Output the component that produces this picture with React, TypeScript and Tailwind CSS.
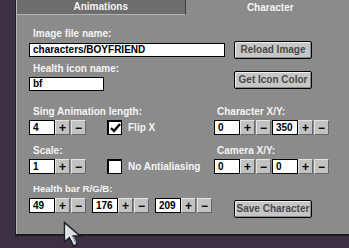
import React from "react";

const StepBtn = ({ label, className = "" }: { label: string; className?: string }) => (
  <div
    className={`w-[15px] h-[15px] flex items-center justify-center bg-[#c2c2c2] border-t border-l border-[#e4e4e4] border-r-[#666] border-b-[#666] border-r border-b text-[12px] leading-none font-bold text-black ${className}`}
  >
    {label}
  </div>
);

const Stepper = ({ value }: { value: string }) => (
  <div className="flex h-[15px]">
    <div className="w-[26px] h-[15px] bg-white border border-black pl-[3px] text-[10px] leading-[13px] font-bold text-black">
      {value}
    </div>
    <StepBtn label="+" />
    <StepBtn label="−" className="ml-px" />
  </div>
);

const Check = ({ checked }: { checked?: boolean }) => (
  <div className="w-[15px] h-[15px] bg-white border border-black border-t-2 border-l-2 flex items-center justify-center">
    {checked && (
      <svg width="11" height="10" viewBox="0 0 11 10">
        <path d="M1 5 L4 8 L10 1" stroke="#000" strokeWidth="2.4" fill="none" />
      </svg>
    )}
  </div>
);

const BigBtn = ({ label }: { label: string }) => (
  <div className="w-[78px] h-[18px] rounded-[2px] border border-black bg-[#c6c6c6] shadow-[inset_1px_1px_0_#efefef,inset_-1px_-1px_0_#8a8a8a] flex items-center justify-center text-[10px] font-bold text-[#4a4a4a] leading-none">
    {label}
  </div>
);

const Label = ({ text, className = "" }: { text: string; className?: string }) => (
  <div className={`h-[12px] text-[10px] leading-[12px] font-bold text-[#f4f4f4] whitespace-nowrap ${className}`}>
    {text}
  </div>
);

export default function App() {
  return (
    <div className="relative w-[349px] h-[248px] overflow-hidden bg-[#3d3045] font-['Liberation_Sans',Arial,sans-serif]">
      <div className="ml-[15px] h-[236px] w-[340px] border-l border-[#1e1a22] border-b-2 border-b-[#1b1b1b] bg-[#8b8b8b]">
        <div className="h-full border-l border-[#b6b6b6]">
          {/* tabs */}
          <div className="flex h-[15px]">
            <div className="w-[169px] h-[15px] bg-[#6d6d6d] border-b border-[#b4b4b4] border-r border-r-[#3a3a3a] flex items-center justify-center text-[10px] leading-[12px] font-bold text-[#f4f4f4]">
              Animations
            </div>
            <div className="w-[170px] h-[15px] flex items-center justify-center text-[10px] leading-[12px] font-bold text-[#f4f4f4]">
              Character
            </div>
          </div>

          <div className="pl-[12px]">
            {/* image file */}
            <div className="flex mt-[13px]">
              <div className="w-[205px]">
                <Label text="Image file name:" className="pl-[4px]" />
                <div className="mt-[3px] w-[196px] h-[14px] bg-white border border-black pl-[3px] text-[10px] leading-[12px] font-bold text-black">
                  characters/BOYFRIEND
                </div>
              </div>
              <div className="pt-[13px]">
                <BigBtn label="Reload Image" />
              </div>
            </div>

            {/* health icon */}
            <div className="flex mt-[4px]">
              <div className="w-[205px]">
                <Label text="Health icon name:" className="pl-[4px]" />
                <div className="mt-[2px] w-[75px] h-[14px] bg-white border border-black pl-[3px] text-[10px] leading-[12px] font-bold text-black">
                  bf
                </div>
              </div>
              <div className="pt-[8px]">
                <BigBtn label="Get Icon Color" />
              </div>
            </div>

            {/* sing length / character xy */}
            <div className="flex mt-[15px]">
              <div className="w-[185px]">
                <Label text="Sing Animation length:" className="pl-[4px]" />
                <div className="flex items-center mt-[2px]">
                  <Stepper value="4" />
                  <div className="ml-[21px]">
                    <Check checked />
                  </div>
                  <span className="ml-[6px] text-[10px] font-bold text-[#f4f4f4]">Flip X</span>
                </div>
              </div>
              <div>
                <Label text="Character X/Y:" className="pl-[3px]" />
                <div className="flex gap-px mt-[2px]">
                  <Stepper value="0" />
                  <Stepper value="350" />
                </div>
              </div>
            </div>

            {/* scale / camera xy */}
            <div className="flex mt-[10px]">
              <div className="w-[185px]">
                <Label text="Scale:" className="pl-[4px]" />
                <div className="flex items-center mt-[2px]">
                  <Stepper value="1" />
                  <div className="ml-[21px]">
                    <Check />
                  </div>
                  <span className="ml-[6px] text-[10px] font-bold text-[#f4f4f4] whitespace-nowrap">No Antialiasing</span>
                </div>
              </div>
              <div>
                <Label text="Camera X/Y:" className="pl-[3px]" />
                <div className="flex gap-px mt-[2px]">
                  <Stepper value="0" />
                  <Stepper value="0" />
                </div>
              </div>
            </div>

            {/* health bar */}
            <div className="mt-[9px]">
              <div className="h-[11px] pl-[4px] text-[9.6px] leading-[11px] font-bold text-[#f4f4f4]">Health bar R/G/B:</div>
              <div className="flex mt-[4px]">
                <div className="flex gap-[6px]">
                  <Stepper value="49" />
                  <Stepper value="176" />
                  <Stepper value="209" />
                </div>
                <div className="ml-[22px] mt-[2px]">
                  <BigBtn label="Save Character" />
                </div>
              </div>
            </div>
          </div>
        </div>
      </div>

      {/* mouse cursor */}
      <svg className="absolute left-[63px] top-[221px]" width="21" height="27" viewBox="0 0 21 27">
        <path d="M1.5 1.5 L1.5 21 L6.5 16.5 L10.5 25 L14 23.5 L10.2 15 L17 15 Z" fill="#d9dee2" stroke="#1c1c24" strokeWidth="1.5" strokeLinejoin="miter" />
        <path d="M3 5 L3 17 L6.5 14 L9 19" fill="none" stroke="#f5f7f8" strokeWidth="1" />
        <path d="M10.5 15.8 L13 22" stroke="#9aa3aa" strokeWidth="1.2" />
      </svg>
    </div>
  );
}
